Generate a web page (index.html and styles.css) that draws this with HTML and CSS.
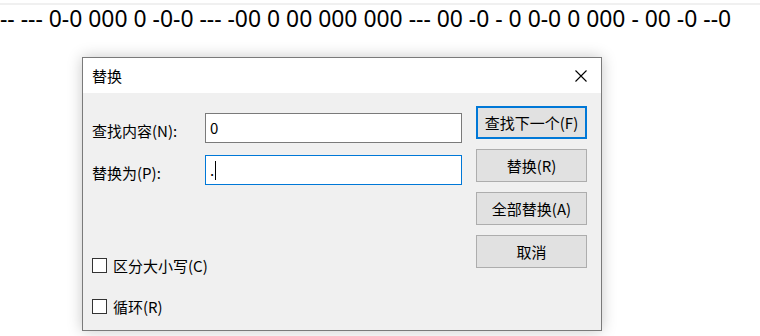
FILE: index.html
```html
<!DOCTYPE html>
<html>
<head>
<meta charset="utf-8">
<link rel="stylesheet" href="styles.css">
</head>
<body>
<div class="page">
  <div class="prevline"></div>
  <div class="textline">-- --- 0-0 000 0 -0-0 --- -00 0 00 000 000 --- 00 -0 - 0 0-0 0 000 - 00 -0 --0</div>
</div>
<div class="dialog">
  <div class="titlebar">
    <span class="title">替换</span>
    <svg class="close" width="12" height="12" viewBox="0 0 12 12"><path d="M0.5 0.5 L11.5 11.5 M11.5 0.5 L0.5 11.5" stroke="#000" stroke-width="1.1" fill="none"/></svg>
  </div>
  <div class="body">
    <div class="left">
      <div class="row row1">
        <span class="label">查找内容(N):</span>
        <div class="input">0</div>
      </div>
      <div class="row row2">
        <span class="label">替换为(P):</span>
        <div class="input focused">.<span class="caret"></span></div>
      </div>
      <div class="checks">
        <label class="check"><span class="box"></span><span>区分大小写(C)</span></label>
        <label class="check"><span class="box"></span><span>循环(R)</span></label>
      </div>
    </div>
    <div class="buttons">
      <div class="btn default">查找下一个(F)</div>
      <div class="btn">替换(R)</div>
      <div class="btn">全部替换(A)</div>
      <div class="btn">取消</div>
    </div>
  </div>
</div>
</body>
</html>
```
FILE: styles.css
```css
html, body {
  margin: 0;
  padding: 0;
  background: #fff;
}
body {
  width: 760px;
  height: 336px;
  overflow: hidden;
  position: relative;
  font-family: "Noto Sans", "Noto Sans CJK SC", sans-serif;
}
.prevline {
  height: 3px;
  border-bottom: 2px solid #f0f0f0;
}
.textline {
  font-family: "Noto Sans", sans-serif;
  font-size: 22.9px;
  line-height: 24px;
  color: #000;
  white-space: nowrap;
  margin-top: 2px;
}
.dialog {
  position: absolute;
  left: 82px;
  top: 57px;
  width: 518px;
  height: 272px;
  border: 1px solid #7a7a7a;
  background: #f0f0f0;
  box-shadow: 0 0 14px rgba(0,0,0,0.22);
  display: flex;
  flex-direction: column;
  font-family: "Noto Sans", "Noto Sans CJK SC", sans-serif;
  font-size: 15px;
  color: #000;
}
.titlebar {
  height: 35px;
  background: #fff;
  display: flex;
  align-items: center;
  justify-content: space-between;
  padding: 0 14px 0 9px;
}
.title {
  font-family: "Noto Sans CJK SC", sans-serif;
  font-size: 15px;
  line-height: 20px;
  margin-top: 1px;
}
.close {
  display: block;
  margin-top: 1px;
}
.body {
  flex: 1;
  display: flex;
  padding: 13px 14px 0 9px;
}
.left {
  flex: 1;
  display: flex;
  flex-direction: column;
}
.row {
  display: flex;
  align-items: center;
}
.row1 {
  margin-top: 7px;
}
.row2 {
  margin-top: 12px;
}
.label {
  width: 113px;
  font-family: "Noto Sans CJK SC", sans-serif;
  font-size: 15px;
  line-height: 20px;
  padding-top: 6px;
}
.input {
  width: 251px;
  height: 28px;
  border: 1px solid #7a7a7a;
  background: #fff;
  padding-left: 4px;
  font-family: "Noto Sans CJK SC", sans-serif;
  font-size: 15px;
  line-height: 26px;
  display: flex;
  align-items: center;
}
.input.focused {
  border-color: #0078d7;
}
.caret {
  display: inline-block;
  width: 0;
  height: 19px;
  border-left: 1px solid #000;
  margin-left: 1px;
  margin-top: 1px;
}
.checks {
  display: flex;
  flex-direction: column;
  gap: 26px;
  margin-top: 73px;
}
.check {
  display: flex;
  align-items: center;
  gap: 6px;
  font-family: "Noto Sans CJK SC", sans-serif;
  font-size: 15px;
  line-height: 14px;
}
.box {
  width: 13px;
  height: 13px;
  border: 1px solid #333;
  background: #fff;
}
.buttons {
  width: 111px;
  display: flex;
  flex-direction: column;
  gap: 10px;
}
.btn {
  height: 31px;
  border: 1px solid #adadad;
  background: #e1e1e1;
  display: flex;
  align-items: center;
  justify-content: center;
  font-family: "Noto Sans CJK SC", sans-serif;
  font-size: 15px;
}
.btn.default {
  height: 29px;
  border: 2px solid #0078d7;
}
```
